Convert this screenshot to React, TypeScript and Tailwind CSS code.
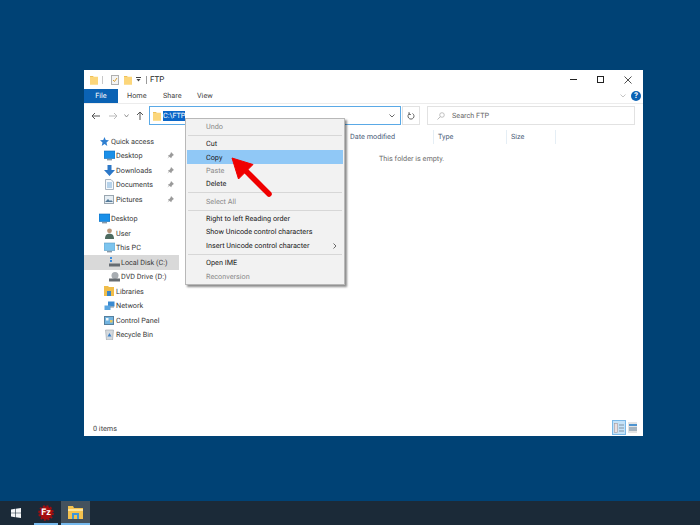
import { ReactNode } from 'react';

function Folder({ className = 'w-[11px] h-[13px]' }: { className?: string }) {
  return (
    <svg className={className} viewBox="0 0 11 13">
      <path d="M0 1h4l1 1h6v11H0z" fill="#fcd67a" />
      <path d="M0 1h4l1 1H0z" fill="#e8b94f" />
    </svg>
  );
}

function Pin() {
  return (
    <svg className="w-[7px] h-[7px]" viewBox="0 0 7 7">
      <path d="M4 0l3 3-1 .4-1.4 1.5-.2 1.3L1.800 4.600.3 6.700.2 6.600l2-1.600L.8 3.400l1.400-.2L3.600 1.600z" fill="#9a9a9a" />
    </svg>
  );
}

function Monitor({ light }: { light?: boolean }) {
  return (
    <svg className="w-[11px] h-[11px]" viewBox="0 0 11 11">
      <rect x="0" y="1" width="11" height="7.500" fill={light ? '#7cc4ee' : '#1a8fe8'} stroke={light ? '#5b9cc4' : '#0e6cb8'} strokeWidth="0.6" />
      <rect x="3" y="9" width="5" height="1.400" fill="#8a9aa8" />
    </svg>
  );
}

const navIcons: Record<string, ReactNode> = {
  star: (
    <svg className="w-[9px] h-[9px]" viewBox="0 0 10 10">
      <path d="M5 0l1.400 3.400L10 3.700 7.200 6l.9 4L5 7.900 1.900 10l.9-4L0 3.700l3.600-.3z" fill="#2f7fd0" />
    </svg>
  ),
  desktop: <Monitor />,
  downloads: (
    <svg className="w-[11px] h-[11px]" viewBox="0 0 11 11">
      <path d="M3.500 0h4v5H11L5.500 11 0 5h3.500z" fill="#2c78c8" />
    </svg>
  ),
  documents: (
    <svg className="w-[9px] h-[11px]" viewBox="0 0 9 11">
      <path d="M.5.500h5.500l2.500 2.500v7.500H.5z" fill="#f4f8fc" stroke="#a8b4c0" />
      <path d="M2 4h5M2 6h5M2 8h5" stroke="#5c9ad0" strokeWidth="0.8" />
    </svg>
  ),
  pictures: (
    <svg className="w-[10px] h-[9px]" viewBox="0 0 10 9">
      <rect x=".5" y=".5" width="9" height="8" fill="#e6eef4" stroke="#9aa6b0" />
      <path d="M1 7l3-3 2 2 1-1 2 2z" fill="#557a99" />
    </svg>
  ),
  user: (
    <svg className="w-[9px] h-[11px]" viewBox="0 0 9 11">
      <circle cx="4.500" cy="2.800" r="2.400" fill="#b89478" />
      <path d="M0 11c0-4 2-5.200 4.500-5.200S9 7 9 11z" fill="#4e6b60" />
    </svg>
  ),
  pc: <Monitor light />,
  disk: (
    <svg className="w-[11px] h-[10px]" viewBox="0 0 11 10">
      <rect x="1" y="0" width="2" height="2" fill="#3c8ee0" />
      <rect x="1" y="3" width="2" height="2" fill="#3c8ee0" />
      <rect x="0" y="6.500" width="11" height="3" fill="#666c72" />
    </svg>
  ),
  dvd: (
    <svg className="w-[11px] h-[10px]" viewBox="0 0 11 10">
      <circle cx="6" cy="3.500" r="3.500" fill="#a8adb2" />
      <rect x="0" y="6.500" width="11" height="3" fill="#666c72" />
    </svg>
  ),
  libraries: (
    <svg className="w-[10px] h-[10px]" viewBox="0 0 10 10">
      <path d="M0 0h4l1 1h5v9H0z" fill="#f0bd4a" />
      <rect x="3" y="5" width="4" height="5" fill="#3a86c8" />
    </svg>
  ),
  network: (
    <svg className="w-[11px] h-[10px]" viewBox="0 0 11 10">
      <rect x="4" y="0.500" width="6.500" height="5" fill="#3a8ad0" />
      <rect x="0.500" y="4.500" width="6" height="4.500" fill="#5ba6e0" />
      <path d="M6 6h4" stroke="#7a8a96" />
    </svg>
  ),
  control: (
    <svg className="w-[10px] h-[9px]" viewBox="0 0 10 9">
      <rect x=".5" y=".5" width="9" height="8" fill="#72b4e0" stroke="#56809e" />
      <rect x="2" y="2" width="2.500" height="2.500" fill="#f0f6fa" />
      <rect x="6" y="4" width="2.500" height="2.500" fill="#e9c65c" />
    </svg>
  ),
  bin: (
    <svg className="w-[9px] h-[11px]" viewBox="0 0 9 11">
      <path d="M.5 1h8l-1 10h-6z" fill="#d5dade" stroke="#9aa2a8" strokeWidth=".6" />
      <path d="M4.500 4l2 3.500h-4z" fill="#3c80c8" />
    </svg>
  ),
};

function NavRow({ icon, label, pinned, level, active, gap }: { icon: string; label: string; pinned?: boolean; level: number; active?: boolean; gap?: boolean }) {
  const pad = level === 0 ? 'pl-[14px]' : level === 1 ? 'pl-[19px]' : 'pl-[24px]';
  return (
    <div className={`flex h-[14.5px] items-center pr-[5px] ${pad} ${active ? 'bg-[#d9d9d9]' : ''} ${gap ? 'mt-[5px]' : ''}`}>
      <span className="flex w-[12px] shrink-0 justify-center">{navIcons[icon]}</span>
      <span className="ml-[1px] flex-1 whitespace-nowrap text-[#3a3a3a]">{label}</span>
      {pinned && <Pin />}
    </div>
  );
}

function MenuItem({ label, disabled, hover, arrow }: { label: string; disabled?: boolean; hover?: boolean; arrow?: boolean }) {
  return (
    <div className={`flex h-[13.4px] items-center pl-[19px] pr-[6px] ${hover ? 'bg-[#90c8f6]' : ''} ${disabled ? 'text-[#8a8a8a]' : 'text-[#1a1a1a]'}`}>
      <span className="flex-1">{label}</span>
      {arrow && (
        <svg className="w-[4px] h-[6px]" viewBox="0 0 4 6">
          <path d="M.5.500L3 3 .5 5.500" fill="none" stroke="#444" strokeWidth=".8" />
        </svg>
      )}
    </div>
  );
}

function MenuSep() {
  return <div className="mx-[1px] my-[1.5px] h-px bg-[#d7d7d7]" />;
}

export default function App() {
  return (
    <div className="relative flex h-[525px] w-[700px] flex-col overflow-hidden bg-[#004275] text-[7.25px] leading-none [text-rendering:geometricPrecision] font-['Roboto','Noto_Sans',sans-serif]">
      <div className="flex-1 pl-[84px] pt-[70px]">
        <div className="relative flex h-[366px] w-[559px] flex-col bg-white">
          {/* title bar */}
          <div className="flex h-[19px] items-center pl-[6px] text-[#222]">
            <Folder className="w-[8px] h-[10px]" />
            <div className="ml-[4px] h-[8px] w-px bg-[#c8c8c8]" />
            <svg className="ml-[8px] w-[8px] h-[10px]" viewBox="0 0 8 10">
              <rect x=".5" y=".5" width="7" height="9" fill="#f4f4f4" stroke="#b0b0b0" />
              <path d="M2 5l1.500 1.500L6 3" fill="none" stroke="#d9a030" />
            </svg>
            <Folder className="ml-[5px] w-[8px] h-[10px]" />
            <svg className="ml-[4px] w-[5px] h-[5px]" viewBox="0 0 5 5">
              <path d="M0 .5h5" stroke="#444" />
              <path d="M.5 2l2 2.500 2-2.500z" fill="#444" />
            </svg>
            <div className="ml-[5px] h-[8px] w-px bg-[#9a9a9a]" />
            <span className="ml-[3px] text-[8px]">FTP</span>
            <div className="ml-auto flex items-center pr-[11px]">
              <div className="h-px w-[7px] bg-[#222]" />
              <div className="ml-[20px] h-[7px] w-[7px] border border-[#222]" />
              <svg className="ml-[20px] w-[8px] h-[8px]" viewBox="0 0 8 8">
                <path d="M.5.500l7 7M7.500.500l-7 7" stroke="#222" strokeWidth=".8" />
              </svg>
            </div>
          </div>
          {/* ribbon tabs */}
          <div className="flex h-[15px] items-stretch border-b border-[#ececec] text-[#444]">
            <div className="flex w-[34px] items-center justify-center bg-[#0a62b4] text-white">File</div>
            <span className="ml-[9px] w-[36px] self-center">Home</span>
            <span className="w-[34px] self-center">Share</span>
            <span className="self-center">View</span>
            <div className="ml-auto flex items-center pr-[2px]">
              <svg className="w-[6px] h-[4px]" viewBox="0 0 6 4">
                <path d="M.5.500L3 3 5.500.500" fill="none" stroke="#b5b5b5" strokeWidth=".8" />
              </svg>
              <div className="ml-[5px] flex h-[10px] w-[10px] items-center justify-center rounded-full bg-[#0a62b4] text-[8px] font-bold text-white">?</div>
            </div>
          </div>
          {/* address row */}
          <div className="mt-[2px] flex h-[19px] items-center pl-[7px] pr-[8px]">
            <svg className="w-[9px] h-[8px]" viewBox="0 0 9 8">
              <path d="M9 4H1M4 1L1 4l3 3" fill="none" stroke="#555" strokeWidth="1" />
            </svg>
            <svg className="ml-[9px] w-[9px] h-[8px]" viewBox="0 0 9 8">
              <path d="M0 4h8M5 1l3 3-3 3" fill="none" stroke="#bbb" strokeWidth="1" />
            </svg>
            <svg className="ml-[6px] w-[5px] h-[4px]" viewBox="0 0 5 4">
              <path d="M.5.500L2.500 3 4.500.500" fill="none" stroke="#777" strokeWidth=".8" />
            </svg>
            <svg className="ml-[7px] w-[8px] h-[9px]" viewBox="0 0 8 9">
              <path d="M4 9V1M1 4l3-3 3 3" fill="none" stroke="#555" strokeWidth="1" />
            </svg>
            <div className="ml-[5px] flex h-[19px] w-[252px] items-center border border-[#5aa9e6] pl-[3px] pr-[5px]">
              <Folder className="w-[8px] h-[10px]" />
              <span className="ml-[2px] bg-[#0a66c8] leading-[10px] text-white">C:\FTP</span>
              <svg className="ml-auto w-[6px] h-[4px]" viewBox="0 0 6 4">
                <path d="M.5.500L3 3 5.500.500" fill="none" stroke="#444" strokeWidth=".8" />
              </svg>
            </div>
            <div className="ml-px flex h-[19px] w-[18px] items-center justify-center border border-[#e2e2e2]">
              <svg className="w-[8px] h-[8px]" viewBox="0 0 8 8">
                <path d="M2.500 1.500a3 3 0 1 0 3 0" fill="none" stroke="#555" strokeWidth=".9" />
                <path d="M2 0v2.500h2" fill="none" stroke="#555" strokeWidth=".8" />
              </svg>
            </div>
            <div className="ml-[7px] flex h-[19px] flex-1 items-center border border-[#e2e2e2] pl-[9px] text-[#6a6a6a]">
              <svg className="w-[8px] h-[8px]" viewBox="0 0 8 8">
                <circle cx="5" cy="3" r="2.300" fill="none" stroke="#a8a8a8" strokeWidth=".7" />
                <path d="M3.300 4.700L.5 7.500" stroke="#a8a8a8" strokeWidth=".8" />
              </svg>
              <span className="ml-[7px]">Search FTP</span>
            </div>
          </div>
          {/* body */}
          <div className="flex min-h-0 flex-1">
            <div className="w-[95px] shrink-0 pt-[9px]">
              <NavRow icon="star" label="Quick access" level={0} />
              <NavRow icon="desktop" label="Desktop" level={1} pinned />
              <NavRow icon="downloads" label="Downloads" level={1} pinned />
              <NavRow icon="documents" label="Documents" level={1} pinned />
              <NavRow icon="pictures" label="Pictures" level={1} pinned />
              <NavRow icon="desktop" label="Desktop" level={0} gap />
              <NavRow icon="user" label="User" level={1} />
              <NavRow icon="pc" label="This PC" level={1} />
              <NavRow icon="disk" label="Local Disk (C:)" level={2} active />
              <NavRow icon="dvd" label="DVD Drive (D:)" level={2} />
              <NavRow icon="libraries" label="Libraries" level={1} />
              <NavRow icon="network" label="Network" level={1} />
              <NavRow icon="control" label="Control Panel" level={1} />
              <NavRow icon="bin" label="Recycle Bin" level={1} />
            </div>
            <div className="flex-1 pt-[5px]">
              <div className="flex h-[14px] items-center pl-[171px] text-[#4c607a]">
                <div className="flex h-full w-[84px] items-center border-r border-[#e5eef5]">Date modified</div>
                <div className="flex h-full w-[73px] items-center border-r border-[#e5eef5] pl-[4px]">Type</div>
                <div className="flex h-full w-[49px] items-center border-r border-[#e5eef5] pl-[4px]">Size</div>
              </div>
              <div className="mt-[11px] pl-[200px] text-[#6d6d6d]">This folder is empty.</div>
            </div>
          </div>
          {/* status bar */}
          <div className="flex h-[17px] items-center pl-[9px] pr-[6px] text-[#444]">
            <span className="pt-[2px]">0 items</span>
            <div className="ml-auto flex items-center">
              <div className="flex h-[15px] w-[14px] items-center justify-center border border-[#7ab8e8] bg-[#c4e2f8]">
                <svg className="w-[10px] h-[10px]" viewBox="0 0 10 10">
                  <rect x=".5" y=".5" width="3" height="9" fill="#eadfe0" stroke="#a59a9e" strokeWidth=".6" />
                  <path d="M5 2h5M5 5h5M5 8h5" stroke="#8294a4" />
                </svg>
              </div>
              <div className="ml-[2px] flex h-[11px] w-[9px] items-center justify-center bg-[#e4e4e4]">
                <svg className="w-[8px] h-[7px]" viewBox="0 0 8 7">
                  <rect width="8" height="2" fill="#4e94d0" />
                  <rect y="3" width="8" height="4" fill="#a6b4c0" />
                </svg>
              </div>
            </div>
          </div>
        </div>
      </div>

      {/* taskbar */}
      <div className="flex h-[24px] items-stretch bg-[#1b2a38]">
        <div className="flex w-[31px] items-center justify-center">
          <svg className="w-[10px] h-[10px]" viewBox="0 0 10 10">
            <path d="M0 1.400L4.200.8v3.900H0zM4.800.7L10 0v4.700H4.800zM0 5.300h4.200v3.900L0 8.600zM4.800 5.300H10V10l-5.200-.7z" fill="#f4f6f8" />
          </svg>
        </div>
        <div className="flex w-[30px] flex-col items-center justify-end">
          <div className="relative flex h-[16px] w-[16px] items-center justify-center">
            <svg className="absolute inset-0 w-[16px] h-[16px]" viewBox="0 0 16 16">
              <circle cx="8" cy="8" r="6.500" fill="#a50d0f" />
              <circle cx="8" cy="8" r="7" fill="none" stroke="#a50d0f" strokeWidth="1.600" strokeDasharray="2 1.700" />
            </svg>
            <span className="relative text-[9px] font-bold text-white">Fz</span>
          </div>
          <div className="mt-[2px] h-[2px] w-[24px] bg-[#76b9ed]" />
        </div>
        <div className="flex w-[29px] items-center justify-center border-b-2 border-[#76b9ed] bg-[#44525e]">
          <svg className="w-[15px] h-[14px]" viewBox="0 0 15 14">
            <path d="M0 1h5l1 2h9v11H0z" fill="#f4c24e" />
            <rect y="4" width="15" height="2" fill="#fbe39a" />
            <rect x="4" y="8" width="7" height="6" fill="#3f96dc" />
            <rect x="6" y="10" width="3" height="4" fill="#f4c24e" />
          </svg>
        </div>
      </div>

      {/* context menu */}
      <div className="absolute left-[185px] top-[118px] w-[160px] border border-[#b8b8b8] bg-[#f2f2f2] px-px pb-[1.3px] pt-[0.7px] shadow-[2px_2px_2px_rgba(0,0,0,0.45)]">
        <MenuItem label="Undo" disabled />
        <MenuSep />
        <MenuItem label="Cut" />
        <MenuItem label="Copy" hover />
        <MenuItem label="Paste" disabled />
        <MenuItem label="Delete" />
        <MenuSep />
        <MenuItem label="Select All" disabled />
        <MenuSep />
        <MenuItem label="Right to left Reading order" />
        <MenuItem label="Show Unicode control characters" />
        <MenuItem label="Insert Unicode control character" arrow />
        <MenuSep />
        <MenuItem label="Open IME" />
        <MenuItem label="Reconversion" disabled />
      </div>

      {/* red arrow */}
      <svg className="absolute left-[228px] top-[154px] w-[46px] h-[45px]" viewBox="0 0 46 45">
        <path d="M41 40L16 15" stroke="#f00000" strokeWidth="5.500" strokeLinecap="round" />
        <path d="M4 4l21 6.500L10.500 25z" fill="#f00000" stroke="#f00000" strokeLinejoin="round" />
      </svg>
    </div>
  );
}
